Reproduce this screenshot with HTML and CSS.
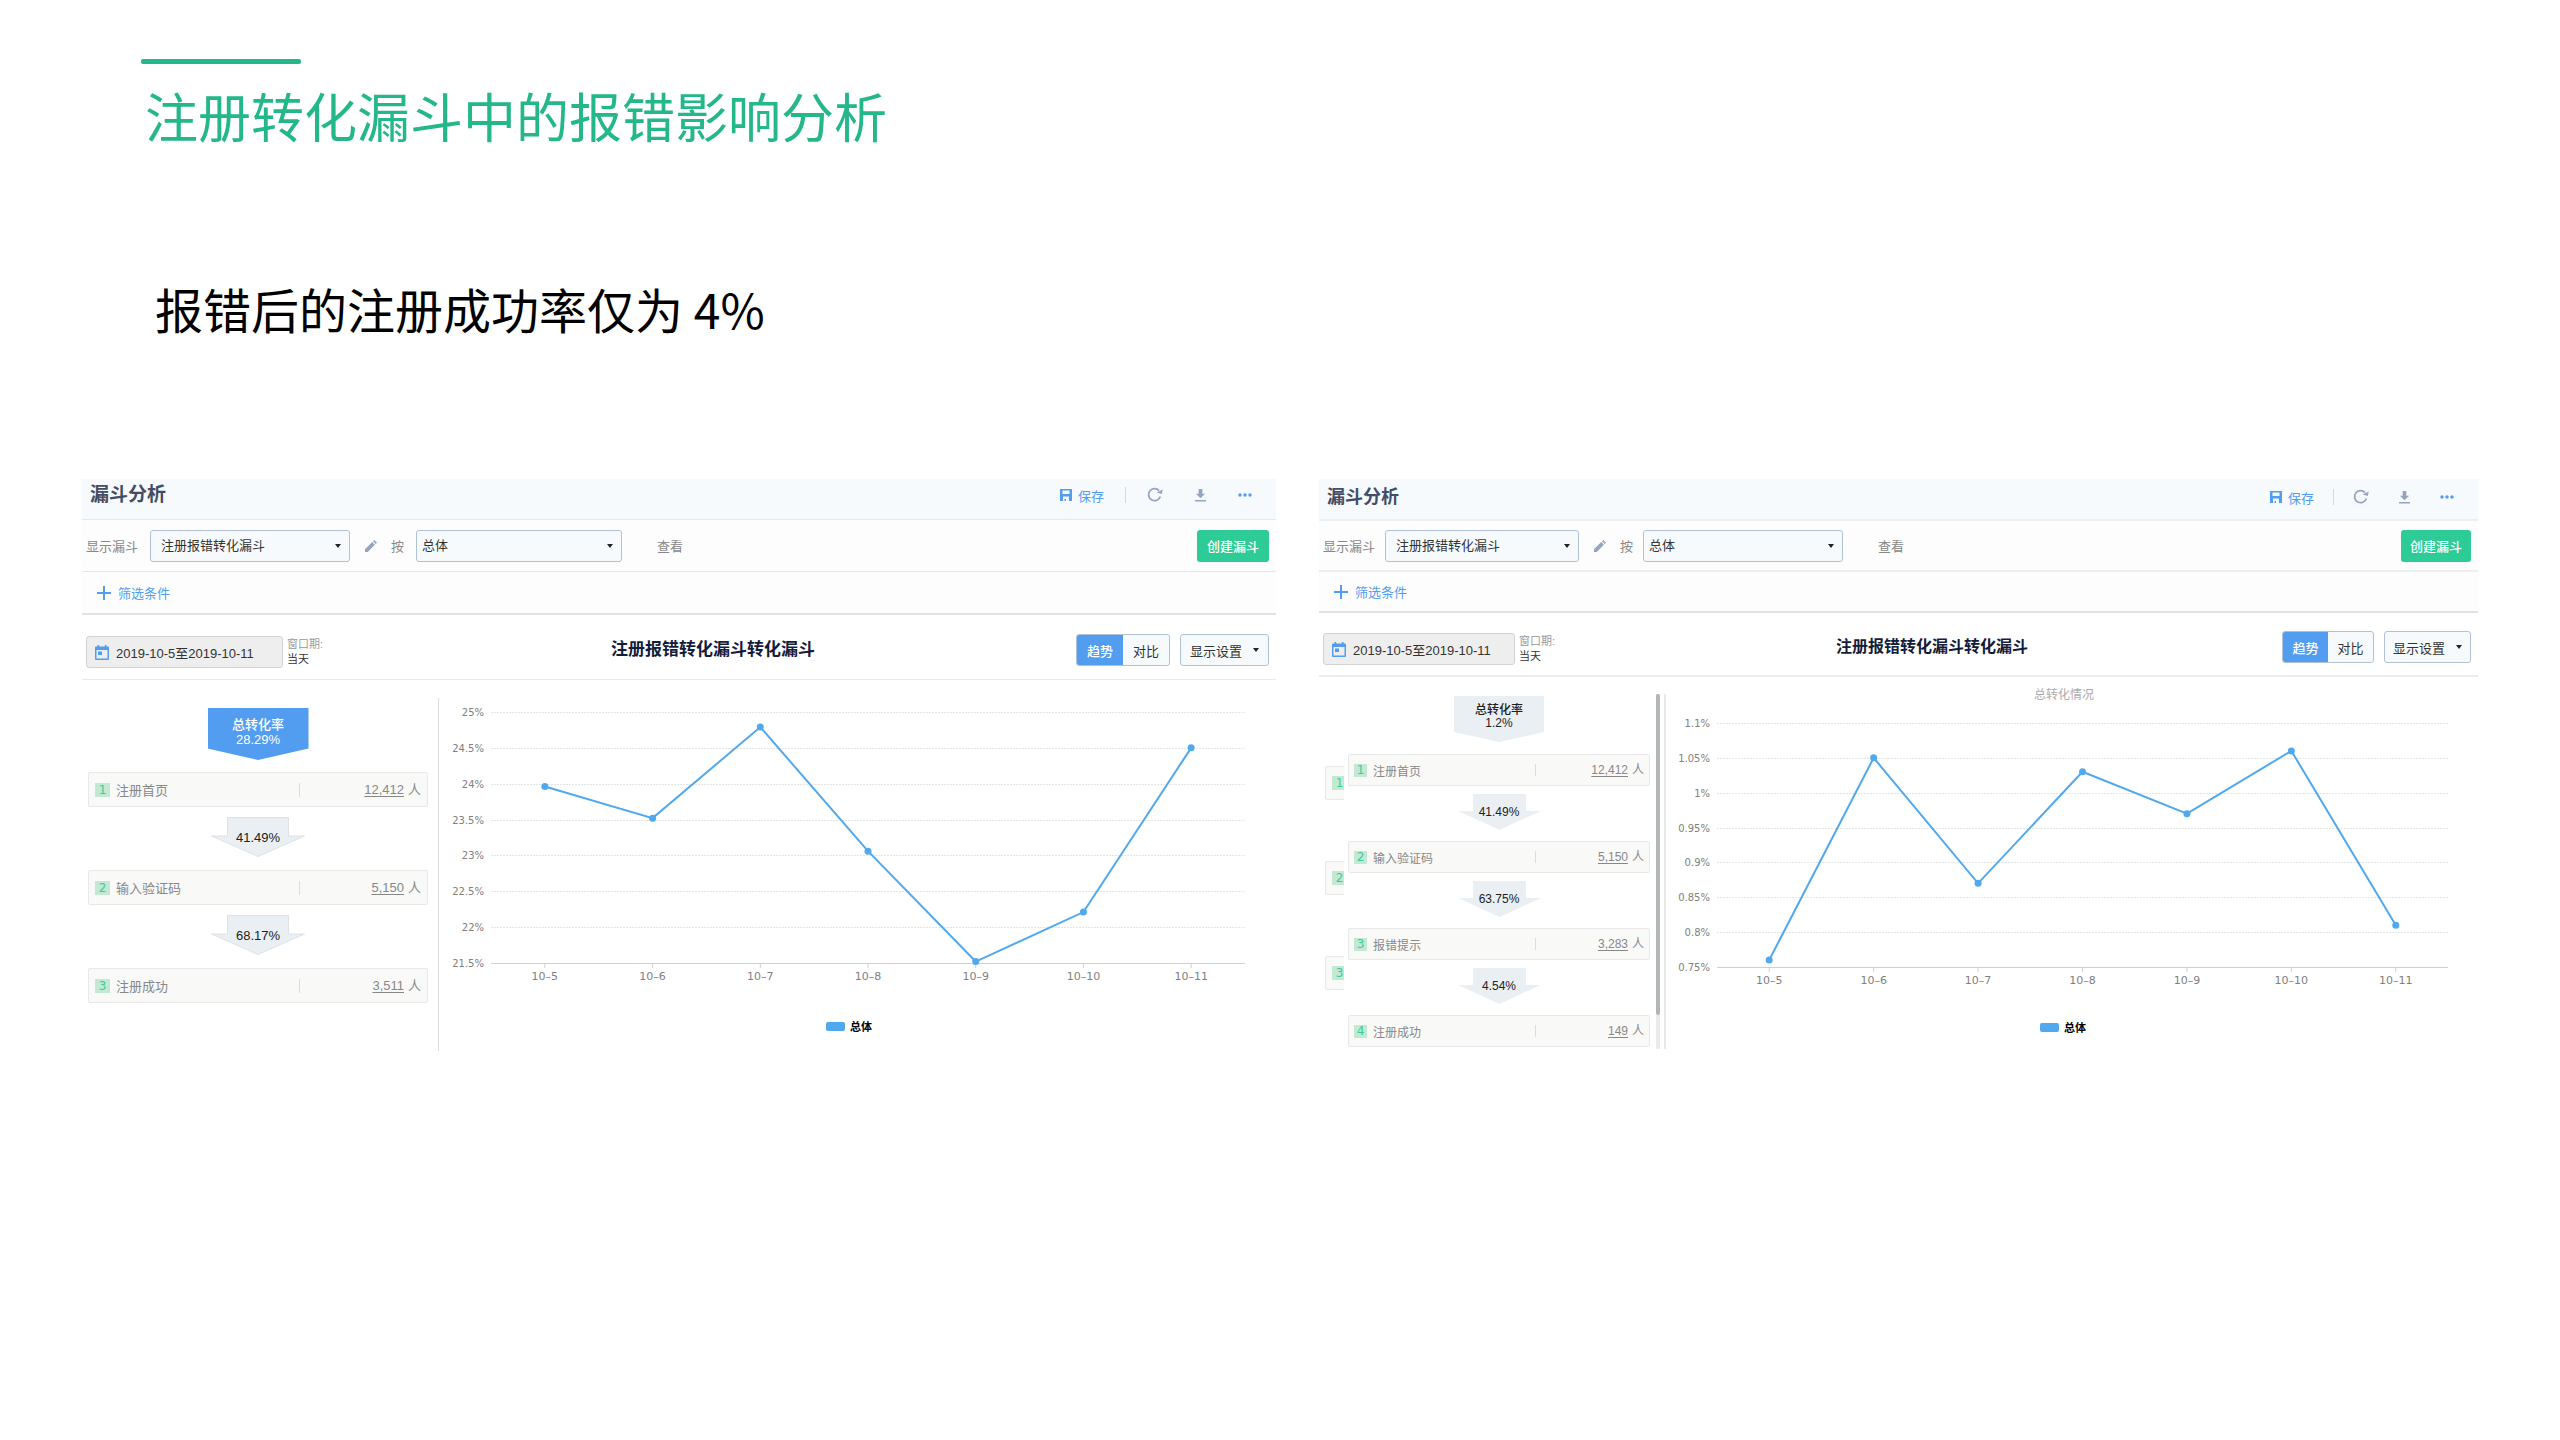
FILE: index.html
```html
<!DOCTYPE html>
<html lang="zh-CN">

<head>
    <meta charset="UTF-8">
    <meta name="viewport" content="width=device-width, initial-scale=1.0">
    <title>注册转化漏斗中的报错影响分析</title>
    <link rel="stylesheet" href="styles.css">
</head>

<body>
    <!-- shared icons -->
    <svg class="sprite" aria-hidden="true">
        <symbol id="icon-save" viewBox="0 0 12 12">
            <path fill-rule="evenodd" d="M0 0h12v12H0zM2.500 1.500v3.500h7V1.500zM3 7.500V12h1.500v-2h1.500v2h3V7.500z" />
        </symbol>
        <symbol id="icon-refresh" viewBox="0 0 16 16">
            <path d="M13.300 9.500A6 6 0 1 1 12 3.600" fill="none" stroke="currentColor" stroke-width="1.800" />
            <path d="M9.600 5.400L15.800 2.600L14.800 7z" />
        </symbol>
        <symbol id="icon-download" viewBox="0 0 12 14">
            <path d="M4 0h4v5h3L6 10L1 5h3zM0 12h12v1.500H0z" />
        </symbol>
        <symbol id="icon-more" viewBox="0 0 14 4">
            <circle cx="2" cy="2" r="1.700" />
            <circle cx="7" cy="2" r="1.700" />
            <circle cx="12" cy="2" r="1.700" />
        </symbol>
        <symbol id="icon-pencil" viewBox="0 0 12 12">
            <path d="M0 12V9.300L7.200 2.100L9.900 4.800L2.700 12zM8 1.300L9.300 0L12 2.700L10.700 4z" />
        </symbol>
        <symbol id="icon-plus" viewBox="0 0 14 14">
            <path d="M6 0h2v6h6v2H8v6H6V8H0V6h6z" />
        </symbol>
        <symbol id="icon-calendar" viewBox="0 0 14 15">
            <path fill-rule="evenodd" d="M2.500 0h1.700v1.500h5.600V0h1.700v1.500H13a1 1 0 0 1 1 1V14a1 1 0 0 1-1 1H1a1 1 0 0 1-1-1V2.500a1 1 0 0 1 1-1h1.500zM1.500 5v8.500h11V5zM3 6.500h4v3.500H3z" />
        </symbol>
    </svg>

    <header class="slide-header">
        <div class="accent"></div>
        <h1>注册转化漏斗中的报错影响分析</h1>
        <h2>报错后的注册成功率仅为 4%</h2>
    </header>

    <main class="panels">
        <section class="panel">
            <div class="panel-header">
                <h3>漏斗分析</h3>
                <div class="actions">
                    <button class="save"><svg width="12" height="12"><use href="#icon-save" /></svg>保存</button>
                    <span class="separator"></span>
                    <button aria-label="刷新"><svg width="16" height="16"><use href="#icon-refresh" /></svg></button>
                    <button aria-label="下载"><svg width="11" height="13"><use href="#icon-download" /></svg></button>
                    <button class="more" aria-label="更多"><svg width="14" height="4"><use href="#icon-more" /></svg></button>
                </div>
            </div>
            <div class="toolbar">
                <label for="funnel-1">显示漏斗</label>
                <span class="select select-funnel"><select id="funnel-1"><option>注册报错转化漏斗</option></select></span>
                <button class="edit" aria-label="编辑"><svg width="12" height="12"><use href="#icon-pencil" /></svg></button>
                <label for="group-1">按</label>
                <span class="select select-group"><select id="group-1"><option>总体</option></select></span>
                <span class="view">查看</span>
                <button class="create">创建漏斗</button>
            </div>
            <div class="filters">
                <button class="add-filter"><svg width="14" height="14"><use href="#icon-plus" /></svg>筛选条件</button>
            </div>
            <div class="report-header">
                <button class="date"><svg width="14" height="15"><use href="#icon-calendar" /></svg>2019-10-5至2019-10-11</button>
                <div class="window">窗口期:<b>当天</b></div>
                <h4>注册报错转化漏斗转化漏斗</h4>
                <div class="segment">
                    <button class="active">趋势</button>
                    <button>对比</button>
                </div>
                <button class="settings">显示设置</button>
            </div>
            <div class="report">
                <div class="funnel-area">
                    <div class="funnel">
                        <div class="total total-active"><b>总转化率</b>28.29%</div>
                        <div class="step"><i>1</i><span>注册首页</span><p><a href="#">12,412</a> 人</p></div>
                        <div class="arrow"><svg viewBox="0 0 94 40"><path d="M16.500 .5h61v18.500h16L47 39.500L.5 19h16z" /></svg><span>41.49%</span></div>
                        <div class="step"><i>2</i><span>输入验证码</span><p><a href="#">5,150</a> 人</p></div>
                        <div class="arrow"><svg viewBox="0 0 94 40"><path d="M16.500 .5h61v18.500h16L47 39.500L.5 19h16z" /></svg><span>68.17%</span></div>
                        <div class="step"><i>3</i><span>注册成功</span><p><a href="#">3,511</a> 人</p></div>
                    </div>
                </div>
                <div class="chart"><svg id="chart-success" viewBox="0 0 837 371"></svg></div>
            </div>
        </section>

        <section class="panel panel-compact">
            <div class="panel-header">
                <h3>漏斗分析</h3>
                <div class="actions">
                    <button class="save"><svg width="12" height="12"><use href="#icon-save" /></svg>保存</button>
                    <span class="separator"></span>
                    <button aria-label="刷新"><svg width="16" height="16"><use href="#icon-refresh" /></svg></button>
                    <button aria-label="下载"><svg width="11" height="13"><use href="#icon-download" /></svg></button>
                    <button class="more" aria-label="更多"><svg width="14" height="4"><use href="#icon-more" /></svg></button>
                </div>
            </div>
            <div class="toolbar">
                <label for="funnel-2">显示漏斗</label>
                <span class="select select-funnel"><select id="funnel-2"><option>注册报错转化漏斗</option></select></span>
                <button class="edit" aria-label="编辑"><svg width="12" height="12"><use href="#icon-pencil" /></svg></button>
                <label for="group-2">按</label>
                <span class="select select-group"><select id="group-2"><option>总体</option></select></span>
                <span class="view">查看</span>
                <button class="create">创建漏斗</button>
            </div>
            <div class="filters">
                <button class="add-filter"><svg width="14" height="14"><use href="#icon-plus" /></svg>筛选条件</button>
            </div>
            <div class="report-header">
                <button class="date"><svg width="14" height="15"><use href="#icon-calendar" /></svg>2019-10-5至2019-10-11</button>
                <div class="window">窗口期:<b>当天</b></div>
                <h4>注册报错转化漏斗转化漏斗</h4>
                <div class="segment">
                    <button class="active">趋势</button>
                    <button>对比</button>
                </div>
                <button class="settings">显示设置</button>
            </div>
            <div class="report">
                <div class="funnel-area">
                    <div class="under">
                        <div class="step"><i>1</i></div>
                        <div class="step"><i>2</i></div>
                        <div class="step"><i>3</i></div>
                    </div>
                    <div class="funnel">
                        <div class="total"><b>总转化率</b>1.2%</div>
                        <div class="step"><i>1</i><span>注册首页</span><p><a href="#">12,412</a> 人</p></div>
                        <div class="arrow"><svg viewBox="0 0 83 36"><path d="M15 0h53v17h15L41.500 36L0 17h15z" /></svg><span>41.49%</span></div>
                        <div class="step"><i>2</i><span>输入验证码</span><p><a href="#">5,150</a> 人</p></div>
                        <div class="arrow"><svg viewBox="0 0 83 36"><path d="M15 0h53v17h15L41.500 36L0 17h15z" /></svg><span>63.75%</span></div>
                        <div class="step"><i>3</i><span>报错提示</span><p><a href="#">3,283</a> 人</p></div>
                        <div class="arrow"><svg viewBox="0 0 83 36"><path d="M15 0h53v17h15L41.500 36L0 17h15z" /></svg><span>4.54%</span></div>
                        <div class="step"><i>4</i><span>注册成功</span><p><a href="#">149</a> 人</p></div>
                    </div>
                    <div class="scrollbar"><div class="thumb"></div></div>
                </div>
                <div class="chart"><svg id="chart-error" viewBox="0 0 812 372"></svg></div>
            </div>
        </section>
    </main>

    <script>
        const days = ['10–5', '10–6', '10–7', '10–8', '10–9', '10–10', '10–11'];

        function add(svg, tag, attrs, text) {
            const el = document.createElementNS('http://www.w3.org/2000/svg', tag);
            for (const key in attrs) {
                el.setAttribute(key, attrs[key]);
            }
            if (text) el.textContent = text;
            svg.appendChild(el);
        }

        function drawChart(id, c) {
            const svg = document.getElementById(id);
            const slot = (c.right - c.left) / days.length;
            const x = i => c.left + slot * (i + 0.5);
            const y = v => c.bottom - (v - c.min) / (c.max - c.min) * (c.bottom - c.top);
            const count = Math.round((c.max - c.min) / c.step);

            for (let i = 0; i <= count; i++) {
                const value = c.min + i * c.step;
                const lineY = Math.round(y(value)) + 0.5;
                add(svg, 'line', { x1: c.left, x2: c.right, y1: lineY, y2: lineY, class: i === 0 ? 'axis' : 'grid' });
                add(svg, 'text', { x: c.left - 7, y: lineY + 3, class: 'y-label' }, parseFloat(value.toFixed(2)) + '%');
            }

            days.forEach((day, i) => {
                add(svg, 'line', { x1: x(i), x2: x(i), y1: c.bottom, y2: c.bottom + 5, class: 'axis' });
                add(svg, 'text', { x: x(i), y: c.bottom + 17, class: 'x-label' }, day);
            });

            add(svg, 'polyline', { points: c.values.map((v, i) => x(i) + ',' + y(v)).join(' '), class: 'series' });
            c.values.forEach((v, i) => add(svg, 'circle', { cx: x(i), cy: y(v), r: 3.5, class: 'dot' }));

            if (c.title) add(svg, 'text', { x: c.center, y: 22, class: 'chart-title' }, c.title);
            add(svg, 'rect', { x: c.center - 24, y: c.legend - 5, width: 19, height: 9, rx: 2, class: 'dot' });
            add(svg, 'text', { x: c.center, y: c.legend + 4, class: 'legend' }, '总体');
        }

        drawChart('chart-success', {
            left: 52, right: 806, top: 32, bottom: 283, center: 411, legend: 347,
            min: 21.5, max: 25, step: 0.5,
            values: [23.96, 23.52, 24.79, 23.06, 21.52, 22.21, 24.5]
        });

        drawChart('chart-error', {
            left: 51, right: 782, top: 46, bottom: 290, center: 398, legend: 351, title: '总转化情况',
            min: 0.75, max: 1.1, step: 0.05,
            values: [0.76, 1.05, 0.87, 1.03, 0.97, 1.06, 0.81]
        });
    </script>
</body>

</html>
```

FILE: styles.css
```css
* {
    box-sizing: border-box;
}

body {
    margin: 0;
    padding: 59px 82px;
    background: #fff;
    font-family: "Liberation Sans", "Noto Sans CJK SC", sans-serif;
    font-size: 13px;
    color: #333;
}

h1, h2, h3, h4, p {
    margin: 0;
}

button {
    display: flex;
    align-items: center;
    justify-content: center;
    padding: 0;
    border: 0;
    background: none;
    font: inherit;
    color: inherit;
    cursor: pointer;
}

svg {
    display: block;
    fill: currentColor;
}

.sprite {
    position: absolute;
    width: 0;
    height: 0;
}

/* slide heading */
.slide-header {
    margin-left: 59px;
    font-family: "Noto Sans CJK SC", sans-serif;
}

.accent {
    width: 160px;
    height: 5px;
    border-radius: 2px;
    background: #23b78a;
}

h1 {
    margin: 16px 0 0 4px;
    font-size: 53px;
    font-weight: 400;
    line-height: 70px;
    color: #23b78a;
}

h2 {
    margin: 128px 0 0 14px;
    font-size: 48px;
    font-weight: 400;
    line-height: 60px;
    color: #000;
}

/* panels */
.panels {
    display: grid;
    grid-template-columns: 1194fr 1159fr;
    gap: 43px;
    align-items: start;
    margin-top: 141px;
}

.panel-header {
    display: flex;
    justify-content: space-between;
    align-items: center;
    height: 41px;
    padding: 0 24px 8px 8px;
    border-bottom: 1px solid #e6e9eb;
    background: #f6fafc;
}

h3 {
    font-size: 19px;
    font-weight: 700;
    line-height: 28px;
    color: #434d66;
}

.actions {
    display: flex;
    align-items: center;
    gap: 32px;
    color: #93a5c0;
}

.save {
    gap: 6px;
    color: #529df0;
}

.separator {
    width: 1px;
    height: 16px;
    margin: 0 -11px;
    background: #d5dade;
}

.more {
    color: #529df0;
}

.toolbar {
    display: flex;
    align-items: center;
    height: 52px;
    padding: 0 7px 0 4px;
    border-bottom: 1px solid #e6e6e6;
    background: #fdfdfd;
    color: #888;
}

.select {
    position: relative;
    margin-left: 12px;
}

.select::after,
.settings::after {
    content: "";
    border: 3px solid transparent;
    border-top: 4px solid #222;
    border-bottom: 0;
}

.select::after {
    position: absolute;
    top: 14px;
    right: 9px;
    pointer-events: none;
}

select {
    appearance: none;
    display: block;
    width: 100%;
    height: 32px;
    padding: 0 20px 0 5px;
    border: 1px solid #b0c1d6;
    border-radius: 3px;
    background: #f6fafd;
    font: inherit;
    color: #333;
}

.select-funnel {
    width: 200px;
}

.select-funnel select {
    padding-left: 10px;
}

.select-group {
    width: 206px;
}

.edit {
    margin: 0 14px 0 15px;
    color: #93a5c0;
}

.view {
    margin-left: 35px;
}

.create {
    width: 72px;
    height: 32px;
    margin-left: auto;
    border-radius: 3px;
    background: #2dcb95;
    font-weight: 500;
    color: #fff;
}

.filters {
    display: flex;
    align-items: center;
    height: 43px;
    padding-left: 15px;
    border-bottom: 2px solid #e2e2e2;
    background: #fdfdfd;
}

.add-filter {
    gap: 7px;
    color: #529df0;
}

.report-header {
    display: flex;
    align-items: center;
    height: 65px;
    padding: 6px 7px 0 4px;
    border-bottom: 1px solid #e9e9e9;
}

.date,
.window {
    margin-top: 4px;
}

.date {
    width: 197px;
    height: 32px;
    justify-content: flex-start;
    gap: 7px;
    padding-left: 8px;
    border: 1px solid #d2d2d2;
    border-radius: 3px;
    background: #eee;
}

.date svg {
    color: #529df0;
}

.window {
    padding: 0 27px 0 4px;
    font-size: 11px;
    line-height: 15px;
    color: #999;
}

.window b {
    display: block;
    font-weight: 400;
    color: #333;
}

h4 {
    flex: 1;
    font-size: 17px;
    font-weight: 700;
    line-height: 24px;
    text-align: center;
    color: #141c3c;
}

.segment {
    display: flex;
    height: 32px;
    border: 1px solid #b0c1d6;
    border-radius: 3px;
    overflow: hidden;
    background: #f6fafd;
}

.segment button {
    width: 46px;
}

.segment .active {
    background: #529df0;
    font-weight: 500;
    color: #fff;
}

.settings {
    width: 89px;
    height: 32px;
    gap: 11px;
    margin-left: 10px;
    border: 1px solid #b0c1d6;
    border-radius: 3px;
    background: #f6fafd;
}

/* funnel */
.report {
    display: flex;
    align-items: flex-start;
}

.funnel-area {
    flex: none;
    display: flex;
    width: 357px;
    height: 353px;
    margin-top: 18px;
    padding: 10px 10px 0 6px;
    border-right: 1px solid #ddd;
}

.funnel {
    flex: 1;
}

.total {
    width: 101px;
    height: 52px;
    margin: 0 auto 12px;
    padding-top: 9px;
    background: #eaeff4;
    clip-path: polygon(0 0, 100% 0, 100% 78%, 50% 100%, 0 78%);
    line-height: 15px;
    text-align: center;
    color: #222;
}

.total b {
    display: block;
    font-weight: 500;
}

.total-active {
    background: #529df0;
    color: #fff;
}

.step {
    display: flex;
    align-items: center;
    height: 35px;
    padding: 0 6px;
    border: 1px solid #e8e8e8;
    border-radius: 2px;
    background: #f9f9f8;
    color: #888;
}

.step i {
    width: 15px;
    margin-right: 6px;
    background: #c3e8d3;
    font-family: "DejaVu Sans", sans-serif;
    font-size: 12px;
    font-style: normal;
    line-height: 14px;
    text-align: center;
    color: #3ccc97;
}

.step span {
    flex: 1;
}

.step p {
    display: flex;
    justify-content: flex-end;
    gap: 4px;
    width: 122px;
    border-left: 1px solid #ddd;
    line-height: 14px;
}

.step a {
    color: inherit;
    text-underline-offset: 2px;
}

.arrow {
    display: grid;
    width: 94px;
    height: 40px;
    margin: 10px auto 13px;
    color: #222;
}

.arrow svg,
.arrow span {
    grid-area: 1 / 1;
}

.arrow svg {
    fill: #eaeff4;
    stroke: #dde2e6;
}

.arrow span {
    place-self: center;
}

/* chart */
.chart {
    flex: 1;
}

.chart svg {
    width: 100%;
}

.grid {
    stroke: #e4e4e4;
    stroke-dasharray: 2 1;
}

.axis {
    stroke: #d0d0d0;
}

.series {
    fill: none;
    stroke: #50a8ee;
    stroke-width: 2;
}

.dot {
    fill: #50a8ee;
}

.y-label,
.x-label {
    fill: #808080;
    font-family: "DejaVu Sans", sans-serif;
}

.y-label {
    font-size: 10px;
    text-anchor: end;
}

.x-label {
    font-size: 11px;
    text-anchor: middle;
}

.chart-title {
    fill: #aaa;
    font-size: 12px;
    text-anchor: middle;
}

.legend {
    fill: #000;
    font-size: 11px;
    font-weight: 700;
}

/* the second report is a little smaller */
.panel-compact .panel-header {
    height: 42px;
    padding-bottom: 4px;
    border-bottom: 2px solid #eceeef;
}

.panel-compact h3 {
    font-size: 18px;
}

.panel-compact .actions {
    gap: 30px;
}

.panel-compact .toolbar {
    height: 51px;
    border-bottom: 2px solid #eee;
}

.panel-compact .select {
    margin-left: 10px;
}

.panel-compact .select-funnel {
    width: 194px;
}

.panel-compact .select-group {
    width: 200px;
}

.panel-compact .create {
    width: 70px;
}

.panel-compact .filters {
    height: 41px;
}

.panel-compact .report-header {
    height: 64px;
    border-bottom: 2px solid #ececec;
}

.panel-compact .date {
    width: 192px;
}

.panel-compact h4 {
    font-size: 16px;
}

.panel-compact .segment button {
    width: 45px;
}

.panel-compact .settings {
    width: 87px;
}

.panel-compact .funnel-area {
    width: 347px;
    height: 355px;
    margin-top: 17px;
    padding: 0 4px 0 6px;
    border-right: 2px solid #e8e8e8;
}

.under {
    width: 19px;
    padding-top: 72px;
    overflow: hidden;
}

.under .step {
    width: 40px;
    height: 34px;
    margin-bottom: 61px;
}

.panel-compact .funnel {
    margin: 2px 6px 0 4px;
    font-size: 12px;
}

.panel-compact .total {
    width: 90px;
    height: 46px;
    margin-bottom: 12px;
    padding-top: 8px;
    line-height: 13px;
}

.panel-compact .funnel .step {
    height: 32px;
    padding: 0 5px;
}

.panel-compact .funnel .step i {
    width: 13px;
    line-height: 13px;
}

.panel-compact .funnel .step p {
    width: 109px;
    line-height: 12px;
}

.panel-compact .arrow {
    width: 83px;
    height: 36px;
    margin: 8px auto 11px;
}

.panel-compact .arrow svg {
    stroke: none;
}

.scrollbar {
    width: 4px;
    background: #eaeaea;
}

.thumb {
    height: 321px;
    border-radius: 2px;
    background: #b2b6b5;
}
```
